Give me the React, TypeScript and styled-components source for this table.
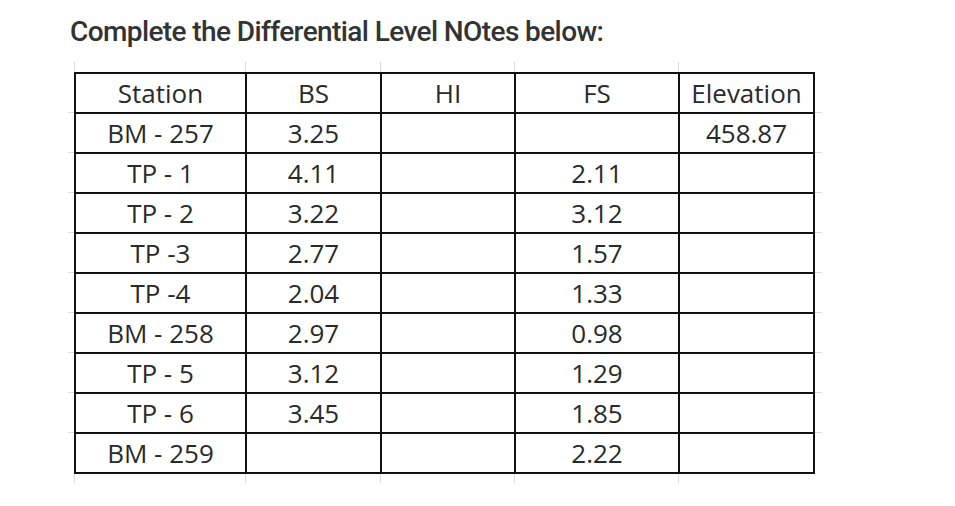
import styled, { createGlobalStyle, css } from "styled-components";

const GlobalStyle = createGlobalStyle`
  html, body {
    margin: 0;
    padding: 0;
    background: #ffffff;
  }
`;

const Page = styled.div`
  width: 955px;
  height: 506px;
  padding: 14px 0 0 70px;
  box-sizing: border-box;
  overflow: hidden;
`;

const Title = styled.h1`
  margin: 0;
  font-family: Roboto, "Noto Sans", sans-serif;
  font-weight: 500;
  font-size: 28px;
  line-height: 36px;
  letter-spacing: -0.6px;
  color: #333333;
`;

const Sheet = styled.div`
  margin-top: 12px;
  margin-left: -4px;
  display: inline-block;
  padding: 10px 8px;
`;

const Table = styled.table`
  border-collapse: collapse;
  font-family: "Open Sans", "Noto Sans", sans-serif;
  font-size: 26px;
  color: #2a2a2a;
  background: #fff;
`;

// faint spreadsheet gridline stubs sticking out of the table edge
const tick = css`
  content: "";
  position: absolute;
  background: #dcdcdc;
`;

const Cell = styled.td<{ $w: number; $top?: boolean; $bottom?: boolean; $first?: boolean; $last?: boolean }>`
  position: relative;
  width: ${(p) => p.$w}px;
  height: 40px;
  padding: 0;
  box-sizing: border-box;
  border: 2px solid #111;
  text-align: center;
  vertical-align: middle;
  line-height: 1;

  ${(p) =>
    p.$top &&
    css`
      &::before {
        ${tick};
        left: -2px;
        top: -12px;
        width: 1px;
        height: 10px;
      }
    `}
  ${(p) =>
    p.$bottom &&
    css`
      &::before {
        ${tick};
        left: -2px;
        bottom: -11px;
        width: 1px;
        height: 9px;
      }
    `}
  ${(p) =>
    p.$first &&
    css`
      &::after {
        ${tick};
        left: -8px;
        top: -2px;
        width: 6px;
        height: 1px;
      }
    `}
  ${(p) =>
    p.$last &&
    css`
      &::after {
        ${tick};
        right: -9px;
        top: -2px;
        width: 7px;
        height: 1px;
      }
    `}
`;

const widths = [171, 135, 134, 164, 135];
const header = ["Station", "BS", "HI", "FS", "Elevation"];
const rows = [
  ["BM - 257", "3.25", "", "", "458.87"],
  ["TP - 1", "4.11", "", "2.11", ""],
  ["TP - 2", "3.22", "", "3.12", ""],
  ["TP -3", "2.77", "", "1.57", ""],
  ["TP -4", "2.04", "", "1.33", ""],
  ["BM - 258", "2.97", "", "0.98", ""],
  ["TP - 5", "3.12", "", "1.29", ""],
  ["TP - 6", "3.45", "", "1.85", ""],
  ["BM - 259", "", "", "2.22", ""],
];

export default function App() {
  return (
    <>
      <GlobalStyle />
      <Page>
        <Title>Complete the Differential Level NOtes below:</Title>
        <Sheet>
          <Table>
            <tbody>
              <tr>
                {header.map((h, i) => (
                  <Cell key={h} $w={widths[i]} $top>
                    {h}
                  </Cell>
                ))}
              </tr>
              {rows.map((r, ri) => (
                <tr key={ri}>
                  {r.map((c, ci) => (
                    <Cell
                      key={ci}
                      $w={widths[ci]}
                      $bottom={ri === rows.length - 1}
                      $first={ci === 0}
                      $last={ci === r.length - 1}
                    >
                      {c}
                    </Cell>
                  ))}
                </tr>
              ))}
            </tbody>
          </Table>
        </Sheet>
      </Page>
    </>
  );
}
